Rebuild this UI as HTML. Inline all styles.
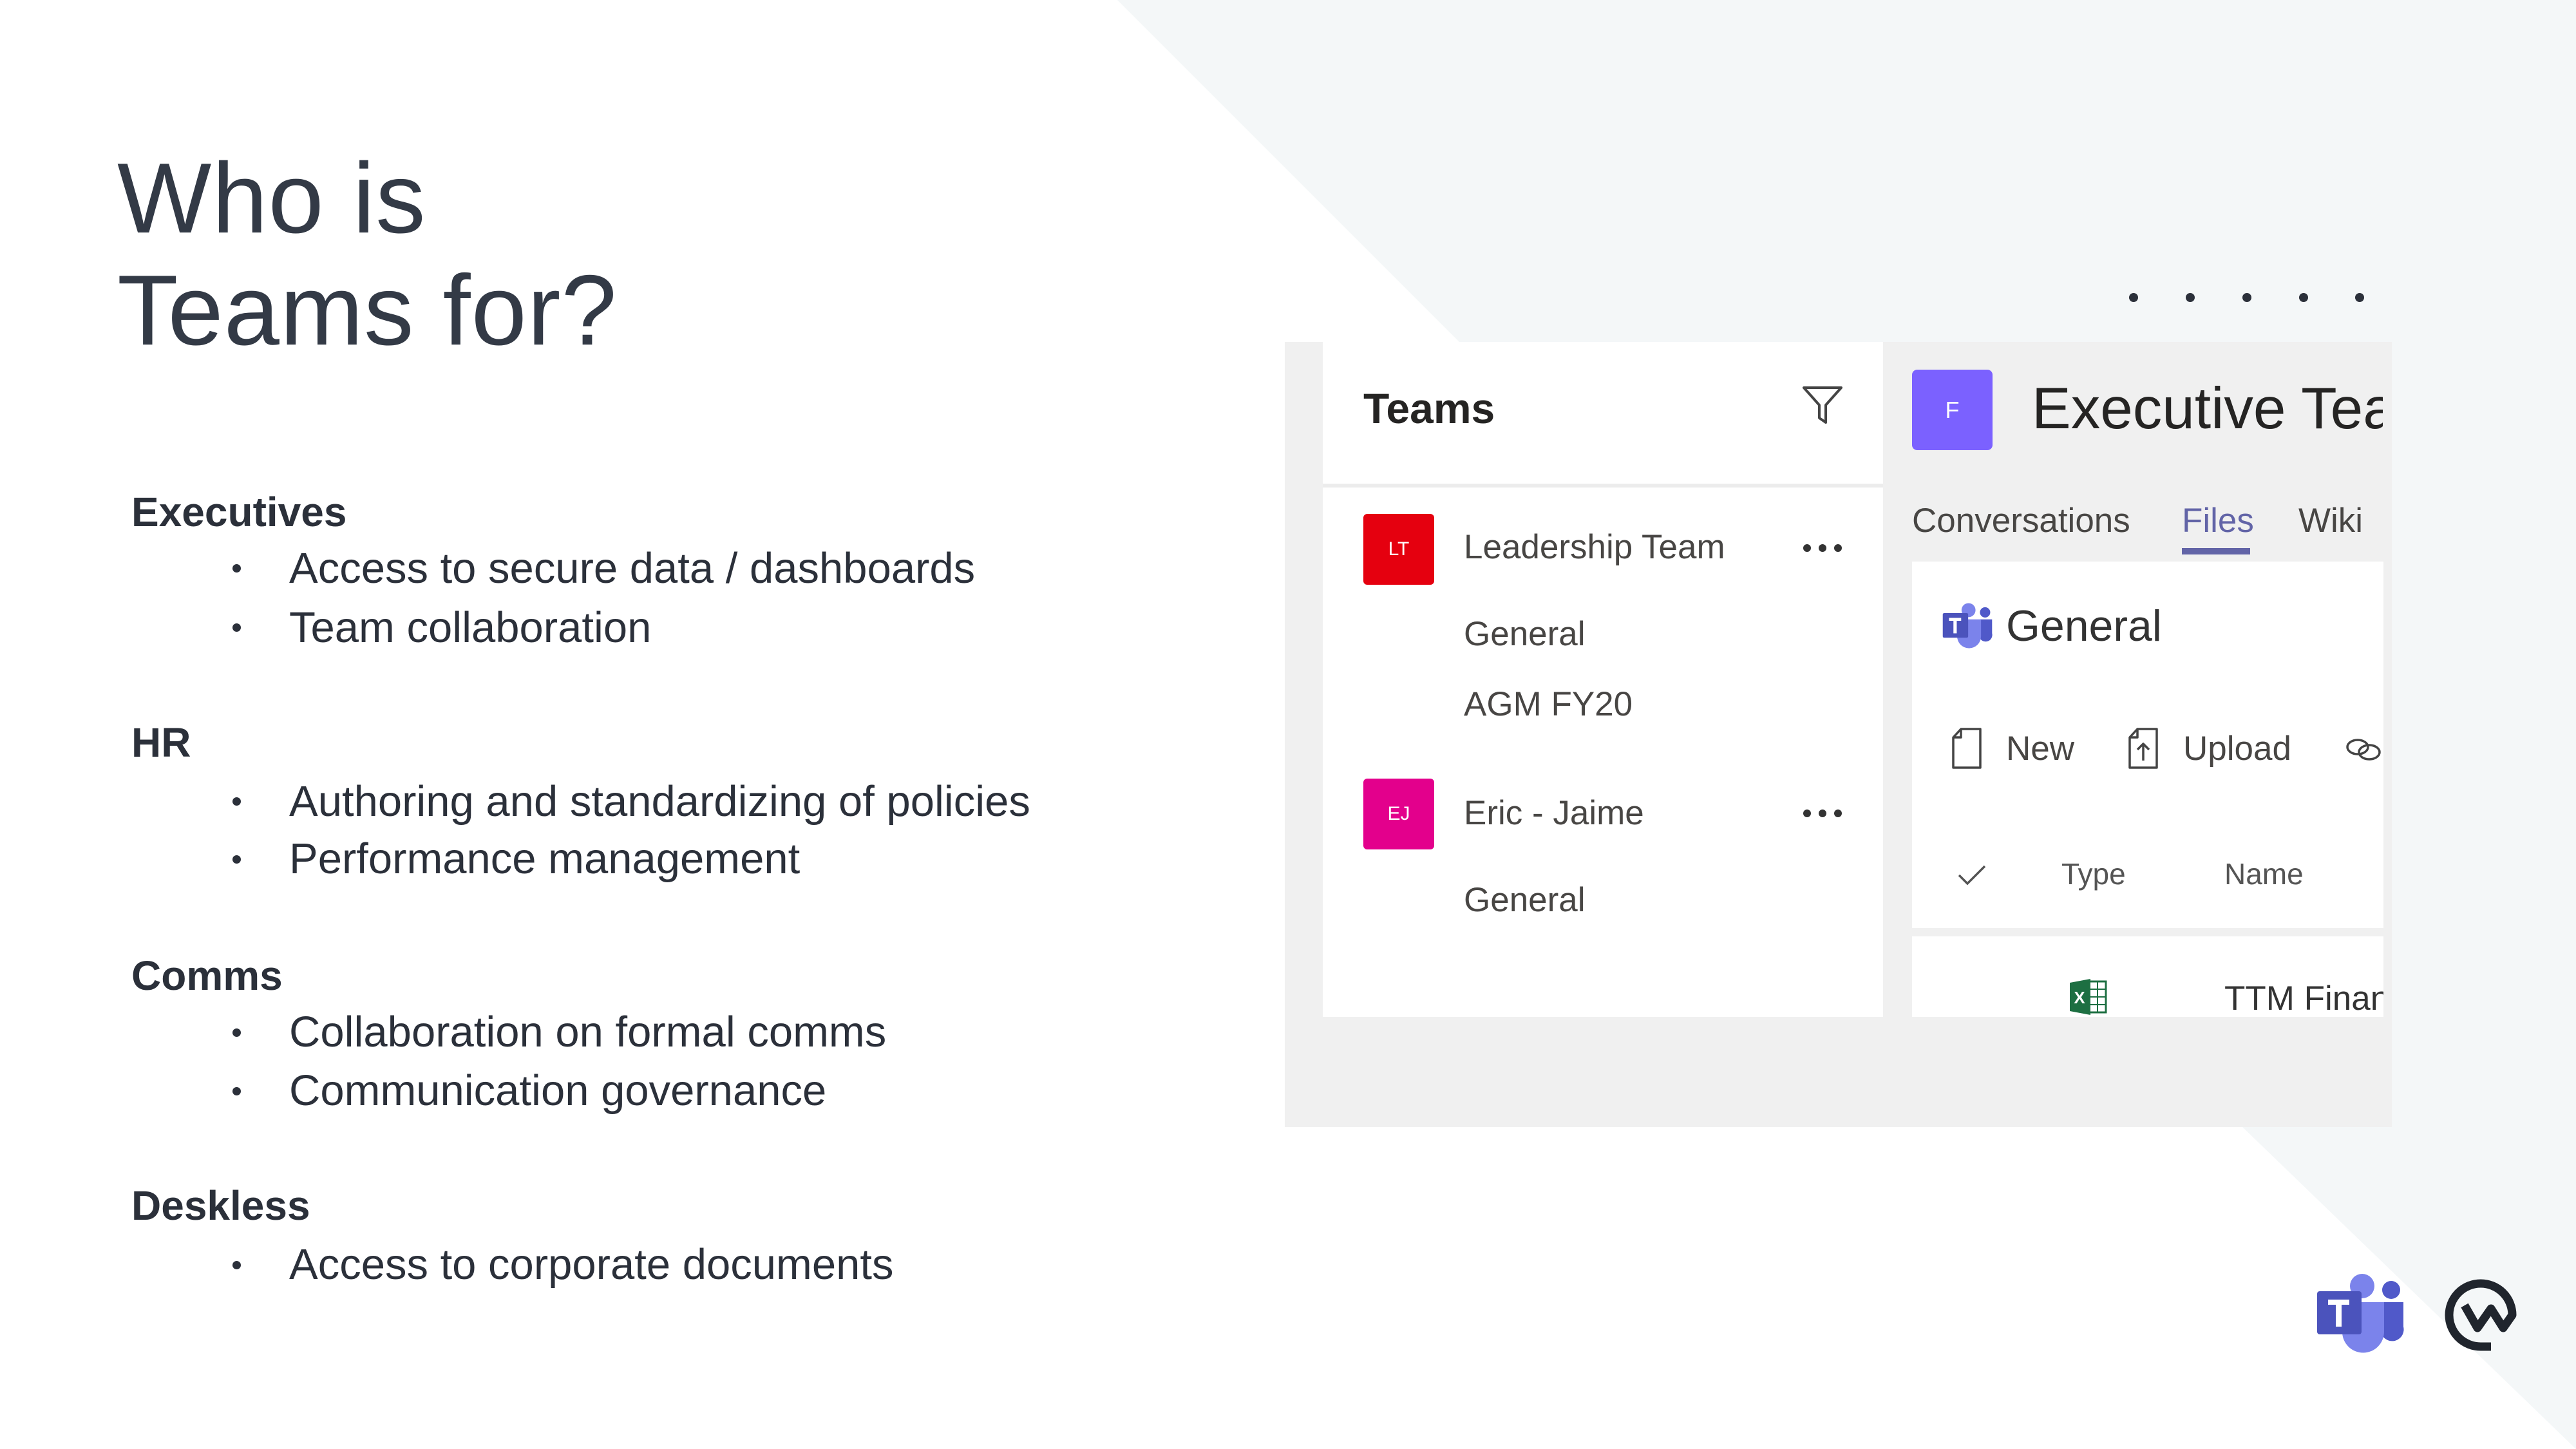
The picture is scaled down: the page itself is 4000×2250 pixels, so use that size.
<!DOCTYPE html>
<html><head><meta charset="utf-8"><style>
*{margin:0;padding:0;box-sizing:border-box}
body{width:4000px;height:2250px;position:relative;overflow:hidden;background:#fff;font-family:"Liberation Sans",sans-serif}
.a{position:absolute;white-space:nowrap}
.h{font-weight:bold;font-size:64px;color:#2b303a;line-height:80px}
.b{font-size:67px;color:#2b303a;line-height:80px}
.dot{position:absolute;width:13px;height:13px;border-radius:50%;background:#2b303a}
.s{font-size:53px;color:#484644;line-height:70px}
</style></head><body>
<svg class="a" style="left:0;top:0" width="4000" height="2250" viewBox="0 0 4000 2250">
<polygon points="1735,0 4000,0 4000,2250 3482,1750 3000,1750 2265,530" fill="#f4f7f8"/>
<g fill="#2b303a"><circle cx="3313" cy="462" r="7"/><circle cx="3401" cy="462" r="7"/><circle cx="3489" cy="462" r="7"/><circle cx="3577" cy="462" r="7"/><circle cx="3664" cy="462" r="7"/></g>
<path d="M3700,2022 H3732 V2060 A18,18 0 0 1 3700,2075 Z" fill="#5059c9"/>
<circle cx="3713" cy="2003" r="14" fill="#5059c9"/>
<path d="M3637,2022 H3702 V2068 A32,32 0 0 1 3637,2068 Z" fill="#7b83eb"/>
<circle cx="3668" cy="1997" r="19" fill="#7b83eb"/>
<rect x="3598" y="2005" width="69" height="67" rx="4" fill="#4b53bc"/>
<rect x="3615" y="2018" width="33" height="8" fill="#fff"/><rect x="3627" y="2024" width="9" height="36" fill="#fff"/>
<path d="M3868,2091 H3852 A49,49 0 1 1 3901,2042 L3887,2062 L3868,2032 L3847,2062 L3827,2027" fill="none" stroke="#20252d" stroke-width="13" stroke-linejoin="round"/>
</svg>

<div class="a" style="left:182px;top:221px;font-size:155px;line-height:174px;color:#333a46;letter-spacing:1px">Who is<br>Teams for?</div>

<div class="a h" style="left:204px;top:755px">Executives</div>
<div class="dot" style="left:361px;top:876px"></div><div class="a b" style="left:449px;top:843px">Access to secure data / dashboards</div>
<div class="dot" style="left:361px;top:968px"></div><div class="a b" style="left:449px;top:935px">Team collaboration</div>

<div class="a h" style="left:204px;top:1113px">HR</div>
<div class="dot" style="left:361px;top:1238px"></div><div class="a b" style="left:449px;top:1205px">Authoring and standardizing of policies</div>
<div class="dot" style="left:361px;top:1328px"></div><div class="a b" style="left:449px;top:1294px">Performance management</div>

<div class="a h" style="left:204px;top:1475px">Comms</div>
<div class="dot" style="left:361px;top:1597px"></div><div class="a b" style="left:449px;top:1563px">Collaboration on formal comms</div>
<div class="dot" style="left:361px;top:1688px"></div><div class="a b" style="left:449px;top:1654px">Communication governance</div>

<div class="a h" style="left:204px;top:1832px">Deskless</div>
<div class="dot" style="left:361px;top:1958px"></div><div class="a b" style="left:449px;top:1924px">Access to corporate documents</div>

<div class="a" style="left:1995px;top:531px;width:1719px;height:1219px;background:#f0f0f0"></div>
<div class="a" style="left:2054px;top:531px;width:870px;height:1048px;background:#fff;overflow:hidden">
  <div class="a" style="left:0;top:220px;width:870px;height:6px;background:#ececec"></div>
  <div class="a" style="left:63px;top:68px;font-size:66px;font-weight:bold;color:#252423;line-height:70px">Teams</div>
  <svg class="a" style="left:744px;top:68px" width="64" height="60" viewBox="0 0 64 60"><path d="M3,3 H61 L37,30 V57 L27,50 V30 Z" fill="none" stroke="#444" stroke-width="4" stroke-linejoin="round"/></svg>
  <div class="a" style="left:63px;top:267px;width:110px;height:110px;background:#e5000f;border-radius:6px;color:#fff;font-size:30px;line-height:110px;text-align:center">LT</div>
  <div class="a s" style="left:219px;top:284px">Leadership Team</div>
  <svg class="a" style="left:744px;top:312px" width="64" height="16"><circle cx="8" cy="8" r="6" fill="#333"/><circle cx="32" cy="8" r="6" fill="#333"/><circle cx="56" cy="8" r="6" fill="#333"/></svg>
  <div class="a s" style="left:219px;top:419px">General</div>
  <div class="a s" style="left:219px;top:528px">AGM FY20</div>
  <div class="a" style="left:63px;top:678px;width:110px;height:110px;background:#e3008c;border-radius:6px;color:#fff;font-size:30px;line-height:110px;text-align:center">EJ</div>
  <div class="a s" style="left:219px;top:697px">Eric - Jaime</div>
  <svg class="a" style="left:744px;top:724px" width="64" height="16"><circle cx="8" cy="8" r="6" fill="#333"/><circle cx="32" cy="8" r="6" fill="#333"/><circle cx="56" cy="8" r="6" fill="#333"/></svg>
  <div class="a s" style="left:219px;top:832px">General</div>
</div>

<div class="a" style="left:2969px;top:574px;width:125px;height:125px;background:#7b61ff;border-radius:8px;color:#fff;font-size:36px;line-height:125px;text-align:center">F</div>
<div class="a" style="left:3155px;top:580px;width:545px;overflow:hidden;font-size:91px;color:#252423;line-height:110px">Executive Team</div>
<div class="a s" style="left:2969px;top:774px">Conversations</div>
<div class="a s" style="left:3388px;top:774px;color:#6264a7">Files</div>
<div class="a" style="left:3388px;top:851px;width:106px;height:10px;background:#6264a7"></div>
<div class="a s" style="left:3569px;top:774px">Wiki</div>

<div class="a" style="left:2969px;top:872px;width:732px;height:569px;background:#fff;overflow:hidden">
  <svg class="a" style="left:46px;top:60px" width="80" height="80" viewBox="3595 1975 140 130">
    <path d="M3700,2022 H3732 V2060 A18,18 0 0 1 3700,2075 Z" fill="#5059c9"/><circle cx="3713" cy="2003" r="14" fill="#5059c9"/>
    <path d="M3637,2022 H3702 V2068 A32,32 0 0 1 3637,2068 Z" fill="#7b83eb"/><circle cx="3668" cy="1997" r="19" fill="#7b83eb"/>
    <rect x="3598" y="2005" width="69" height="67" rx="4" fill="#4b53bc"/><rect x="3615" y="2018" width="33" height="8" fill="#fff"/><rect x="3627" y="2024" width="9" height="36" fill="#fff"/>
  </svg>
  <div class="a" style="left:146px;top:62px;font-size:68px;color:#333;line-height:76px">General</div>
  <svg class="a" style="left:60px;top:257px" width="50" height="66" viewBox="0 0 50 66"><path d="M16,3 H46 V63 H4 V16 Z M4,16 H16 V3" fill="none" stroke="#444" stroke-width="3.5" stroke-linejoin="round"/></svg>
  <div class="a s" style="left:146px;top:256px">New</div>
  <svg class="a" style="left:334px;top:257px" width="50" height="66" viewBox="0 0 50 66"><path d="M16,3 H46 V63 H4 V16 Z M4,16 H16 V3 M25,52 V26 M16,35 L25,26 L34,35" fill="none" stroke="#444" stroke-width="3.5" stroke-linejoin="round"/></svg>
  <div class="a s" style="left:421px;top:256px">Upload</div>
  <svg class="a" style="left:672px;top:272px" width="60" height="40" viewBox="0 0 60 40"><ellipse cx="20" cy="16" rx="16" ry="11" fill="none" stroke="#444" stroke-width="3.5"/><ellipse cx="38" cy="24" rx="16" ry="11" fill="none" stroke="#444" stroke-width="3.5"/></svg>
  <svg class="a" style="left:70px;top:470px" width="46" height="34"><path d="M3,17 L16,30 L43,3" fill="none" stroke="#555" stroke-width="3.5"/></svg>
  <div class="a" style="left:232px;top:460px;font-size:46px;color:#555;line-height:50px">Type</div>
  <div class="a" style="left:485px;top:460px;font-size:46px;color:#555;line-height:50px">Name</div>
</div>
<div class="a" style="left:2969px;top:1454px;width:732px;height:125px;background:#fff;overflow:hidden">
  <svg class="a" style="left:245px;top:66px" width="58" height="56" viewBox="0 0 58 56"><rect x="20" y="4" width="36" height="48" fill="#fff" stroke="#1d6f42" stroke-width="3"/><path d="M30,4 V52 M43,4 V52 M20,16 H56 M20,28 H56 M20,40 H56" stroke="#1d6f42" stroke-width="2"/><path d="M0,6 L32,0 V56 L0,50 Z" fill="#1d6f42"/><text x="15" y="38" font-size="26" font-weight="bold" fill="#fff" text-anchor="middle" font-family="Liberation Sans">X</text></svg>
  <div class="a s" style="left:485px;top:62px;color:#333">TTM Finance</div>
</div>
</body></html>
